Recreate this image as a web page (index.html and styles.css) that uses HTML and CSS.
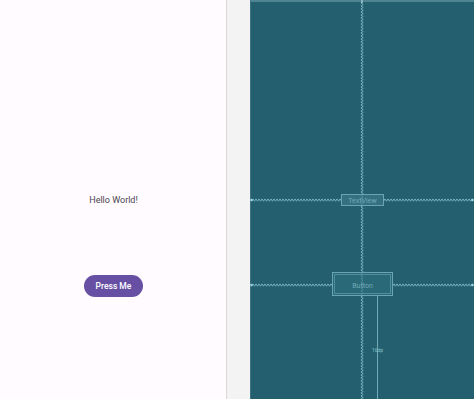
FILE: index.html
```html
<!DOCTYPE html>
<html>
<head>
<meta charset="utf-8">
<link rel="stylesheet" href="styles.css">
</head>
<body>
<div class="design">
  <div class="hello">Hello World!</div>
  <button class="press">Press Me</button>
</div>
<div class="gap"></div>
<div class="blueprint">
  <svg class="bp-svg" width="224" height="399" viewBox="0 0 224 399" xmlns="http://www.w3.org/2000/svg">
    <defs>
      <pattern id="zv" patternUnits="userSpaceOnUse" width="4" height="3" x="110" y="0">
        <path d="M0.8 0 L3.2 1.5 L0.8 3" fill="none" stroke="#7fb7c5" stroke-width="0.9"/>
      </pattern>
      <pattern id="zh" patternUnits="userSpaceOnUse" width="3" height="4" x="0" y="198">
        <path d="M0 0.8 L1.5 3.2 L3 0.8" fill="none" stroke="#7fb7c5" stroke-width="0.9"/>
      </pattern>
      <pattern id="zh2" patternUnits="userSpaceOnUse" width="3" height="4" x="0" y="283">
        <path d="M0 0.8 L1.5 3.2 L3 0.8" fill="none" stroke="#7fb7c5" stroke-width="0.9"/>
      </pattern>
    </defs>
    <rect x="0" y="0" width="224" height="2" fill="#4f8593"/>
    <rect x="0" y="0" width="1" height="399" fill="#3d7584"/>
    <!-- horizontal constraints -->
    <rect x="1" y="198" width="90" height="4" fill="url(#zh)"/>
    <rect x="133" y="198" width="90" height="4" fill="url(#zh)"/>
    <rect x="1" y="283" width="81" height="4" fill="url(#zh2)"/>
    <rect x="143" y="283" width="80" height="4" fill="url(#zh2)"/>
    <circle cx="1.5" cy="200" r="1.3" fill="#9fd0db"/>
    <circle cx="222.5" cy="200" r="1.3" fill="#9fd0db"/>
    <circle cx="1.5" cy="285" r="1.3" fill="#9fd0db"/>
    <circle cx="222.5" cy="285" r="1.3" fill="#9fd0db"/>
    <!-- vertical constraint -->
    <rect x="110" y="2" width="4" height="397" fill="url(#zv)"/>
    <rect x="111.5" y="0" width="1" height="3" fill="#b5e0ea"/>
    <!-- TextView -->
    <rect x="91.5" y="194.5" width="42" height="11" fill="#3a7888" fill-opacity="0.7" stroke="#6aa3b1" stroke-width="1"/>
    <text x="112.5" y="202.8" class="bp-label" text-anchor="middle">TextView</text>
    <!-- Button -->
    <rect x="82.5" y="272.5" width="60" height="23" fill="#2f6f7e" fill-opacity="0.6" stroke="#6aa3b1" stroke-width="1"/>
    <rect x="84.5" y="274.5" width="56" height="19" fill="none" stroke="#4f8e9d" stroke-width="1"/>
    <text x="112.5" y="287.8" class="bp-label" text-anchor="middle">Button</text>
    <!-- bottom margin -->
    <line x1="127.5" y1="296" x2="127.5" y2="399" stroke="#73aab8" stroke-width="1"/>
    <text x="127.5" y="352" class="bp-small" text-anchor="middle">16dp</text>
  </svg>
</div>
</body>
</html>
```
FILE: styles.css
```css
html, body {
  margin: 0;
  padding: 0;
}
body {
  display: flex;
  width: 474px;
  height: 399px;
  overflow: hidden;
  font-family: Roboto, "Liberation Sans", sans-serif;
  background: #f3f3f3;
}
.design {
  width: 226px;
  height: 399px;
  background: #fffbfe;
  border-right: 1px solid #d9d9d9;
  display: flex;
  flex-direction: column;
  align-items: center;
  box-sizing: content-box;
}
.hello {
  margin-top: 194px;
  font-size: 9px;
  line-height: 12px;
  color: #4a454f;
  padding-left: 1px;
}
.press {
  margin-top: 69px;
  width: 59px;
  height: 22px;
  border: none;
  border-radius: 11px;
  background: #6750a4;
  color: #ffffff;
  font-family: Roboto, "Liberation Sans", sans-serif;
  font-weight: 500;
  font-size: 8.5px;
  padding: 0;
  margin-left: 1px;
}
.gap {
  width: 23px;
  height: 399px;
  background: #f3f3f3;
}
.blueprint {
  width: 224px;
  height: 399px;
  background: #235f6e;
}
.bp-svg {
  display: block;
}
.bp-label {
  font-family: Roboto, "Liberation Sans", sans-serif;
  font-size: 7px;
  fill: #74a9b7;
}
.bp-small {
  font-family: Roboto, "Liberation Sans", sans-serif;
  font-size: 5px;
  fill: #8cc3cf;
}
```
